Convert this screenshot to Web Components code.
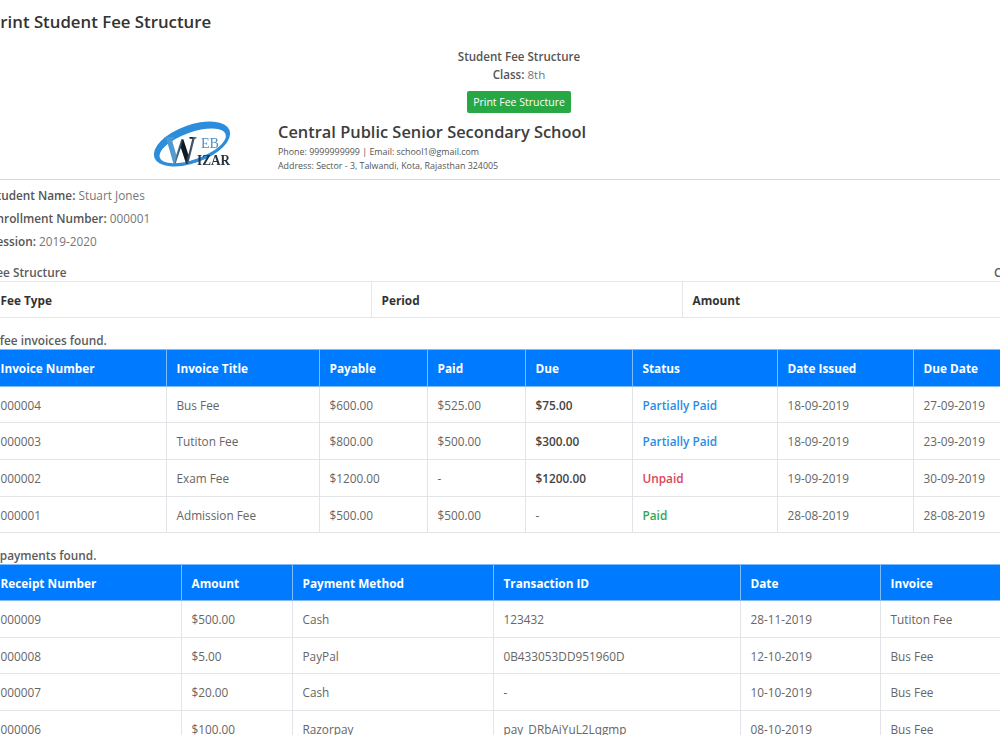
<!DOCTYPE html>
<html lang="en">
<head>
<meta charset="utf-8">
<title>Print Student Fee Structure</title>
<style>
  html, body { margin: 0; background: #fff; overflow: hidden; }
  body { font: 11.8px "Open Sans", "Noto Sans", sans-serif; color: #666; }
</style>
</head>
<body>

<app-page>
  <page-title>Print Student Fee Structure</page-title>
  <print-panel>
    <school-letterhead></school-letterhead>
  </print-panel>
  <student-info></student-info>

  <section-caption right="Class: 8th" style="height:28px">Fee Structure</section-caption>
  <data-table id="fees" plain></data-table>

  <section-caption style="height:31px">4 fee invoices found.</section-caption>
  <data-table id="invoices"></data-table>

  <section-caption style="height:31px">9 payments found.</section-caption>
  <data-table id="payments"></data-table>
</app-page>

<script>
class AppPage extends HTMLElement {
    connectedCallback() {
        this.attachShadow({ mode: 'open' });
        this.shadowRoot.innerHTML = `
            <style>
                :host { display: block; height: 735px; overflow: hidden; }
                .inner { margin-left: -10px; width: 1058px; }
            </style>
            <div class="inner"><slot></slot></div>
        `;
    }
}

class PageTitle extends HTMLElement {
    connectedCallback() {
        this.attachShadow({ mode: 'open' });
        this.shadowRoot.innerHTML = `
            <style>
                :host {
                    display: block;
                    padding: 11px 0 0 0;
                    height: 33px;
                    font-size: 16.8px;
                    font-weight: 600;
                    line-height: 22px;
                    color: #333;
                }
            </style>
            <slot></slot>
        `;
    }
}

class PrintPanel extends HTMLElement {
    connectedCallback() {
        this.attachShadow({ mode: 'open' });
        this.shadowRoot.innerHTML = `
            <style>
                :host { display: block; text-align: center; padding-top: 4px; }
                .head { font-weight: 600; color: #555; line-height: 18px; font-size: 11.6px; }
                .cls { height: 18px; line-height: 18px; color: #555; font-size: 11.6px; font-weight: 600; }
                .cls span { font-weight: 400; color: #777; }
                button {
                    display: block;
                    margin: 7px auto 7px;
                    width: 104px;
                    height: 22px;
                    padding: 0;
                    border: 0;
                    border-radius: 2px;
                    background: #28a745;
                    color: #fff;
                    font: 10.5px "Open Sans", "Noto Sans", sans-serif;
                }
            </style>
            <div class="head">Student Fee Structure</div>
            <div class="cls">Class: <span>8th</span></div>
            <button>Print Fee Structure</button>
            <slot></slot>
        `;
    }
}

class SchoolLetterhead extends HTMLElement {
    connectedCallback() {
        this.attachShadow({ mode: 'open' });
        this.shadowRoot.innerHTML = `
            <style>
                :host {
                    display: block;
                    border-bottom: 1px solid #d8d8d8;
                    text-align: left;
                    height: 59px;
                }
                .row { display: flex; padding-left: 164px; }
                svg { width: 78px; height: 48px; flex: none; overflow: visible; filter: blur(.4px); }
                .txt { margin-left: 46px; }
                h1 { margin: 0 0 1px; font-size: 16.4px; font-weight: 600; line-height: 24px; color: #3d3d3d; }
                p { margin: 0; font-size: 8.9px; line-height: 14px; color: #555; }
            </style>
            <div class="row">
                <svg viewBox="0 0 78 48" aria-label="Web Wizar logo">
                    <defs>
                        <linearGradient id="w" x1="0" y1="0" x2="1" y2=".3">
                            <stop offset="0" stop-color="#3f97d8"/>
                            <stop offset=".5" stop-color="#5a9ccc"/>
                            <stop offset=".62" stop-color="#101820"/>
                            <stop offset=".8" stop-color="#101820"/>
                            <stop offset="1" stop-color="#7aa6c8"/>
                        </linearGradient>
                    </defs>
                    <g transform="rotate(-20 38 24)">
                        <path fill="#2b8ddb" fill-rule="evenodd" d="M-2 24a40 19 0 1 0 80 0a40 19 0 1 0 -80 0z M3 26a35 13.5 0 1 0 70 0a35 13.5 0 1 0 -70 0z"/>
                    </g>
                    <text x="10" y="43" font-family="Liberation Serif" font-weight="700" font-size="40" fill="url(#w)" textLength="33" lengthAdjust="spacingAndGlyphs">W</text>
                    <text x="47" y="28" font-family="Liberation Serif" font-size="15" fill="#4f8fc2" textLength="18" lengthAdjust="spacingAndGlyphs">EB</text>
                    <text x="43" y="45" font-family="Liberation Serif" font-weight="700" font-size="14" fill="#2a3340" textLength="33" lengthAdjust="spacingAndGlyphs">IZAR</text>
                </svg>
                <div class="txt">
                    <h1>Central Public Senior Secondary School</h1>
                    <p>Phone: 9999999999 | Email: school1@gmail.com</p>
                    <p>Address: Sector - 3, Talwandi, Kota, Rajasthan 324005</p>
                </div>
            </div>
        `;
    }
}

class StudentInfo extends HTMLElement {
    connectedCallback() {
        this.attachShadow({ mode: 'open' });
        this.shadowRoot.innerHTML = `
            <style>
                :host { display: block; padding-top: 4px; color: #777; }
                div { height: 23px; line-height: 23px; }
                b { font-weight: 600; color: #555; }
            </style>
            <div><b>Student Name:</b> Stuart Jones</div>
            <div><b>Enrollment Number:</b> 000001</div>
            <div><b>Session:</b> 2019-2020</div>
        `;
    }
}

class SectionCaption extends HTMLElement {
    connectedCallback() {
        this.attachShadow({ mode: 'open' });
        const right = this.getAttribute('right');
        this.shadowRoot.innerHTML = `
            <style>
                :host {
                    display: flex;
                    justify-content: space-between;
                    align-items: flex-end;
                    line-height: 18px;
                    font-weight: 600;
                    color: #5c5c5c;
                }
                .right { width: 54px; white-space: nowrap; }
            </style>
            <div><slot></slot></div>
            ${right ? `<div class="right">${right}</div>` : ''}
        `;
    }
}

class DataTable extends HTMLElement {
    set data(d) {
        this.attachShadow({ mode: 'open' });
        const plain = this.hasAttribute('plain');
        const cols = d.widths.map(w => `<col style="width:${w}px">`).join('');
        const heads = d.heads.map(h => `<th>${h}</th>`).join('');
        // row heights alternate because the source rows are 36.67px tall
        const rows = (d.rows || []).map((r, i) => `<tr style="height:${d.heights[i]}px">${r.map(c => {
            if (c && c.cls) return `<td class="${c.cls}">${c.t}</td>`;
            return `<td>${c}</td>`;
        }).join('')}</tr>`).join('');
        this.shadowRoot.innerHTML = `
            <style>
                :host { display: block; }
                table { border-collapse: collapse; table-layout: fixed; width: ${d.widths.reduce((a, b) => a + b, 0)}px; }
                th, td {
                    padding: 0 10px 0 9.5px;
                    border: 1px solid #e2e4e8;
                    text-align: left;
                    white-space: nowrap;
                    box-sizing: border-box;
                }
                th { font-weight: 700; background: #007bff; color: #fff; border-color: #7fbcfb; }
                td { color: #666; }
                .plain th { background: #fff; color: #333; border-color: #e6e6e6; }
                .due { font-weight: 600; color: #444; }
                .part { font-weight: 600; color: #2b8ce6; }
                .unpaid { font-weight: 600; color: #d9455a; }
                .paid { font-weight: 600; color: #2fa84f; }
            </style>
            <table class="${plain ? 'plain' : ''}">
                <colgroup>${cols}</colgroup>
                <thead><tr style="height:${d.headHeight || 36}px">${heads}</tr></thead>
                <tbody>${rows}</tbody>
            </table>
        `;
    }
}

customElements.define('app-page', AppPage);
customElements.define('page-title', PageTitle);
customElements.define('print-panel', PrintPanel);
customElements.define('school-letterhead', SchoolLetterhead);
customElements.define('student-info', StudentInfo);
customElements.define('section-caption', SectionCaption);
customElements.define('data-table', DataTable);

const due = t => ({ t, cls: 'due' });
const part = { t: 'Partially Paid', cls: 'part' };
const unpaid = { t: 'Unpaid', cls: 'unpaid' };
const paid = { t: 'Paid', cls: 'paid' };

document.getElementById('fees').data = {
    widths: [381, 311, 364],
    heads: ['Fee Type', 'Period', 'Amount']
};

document.getElementById('invoices').data = {
    widths: [176, 153, 108, 98, 107, 145, 136, 133],
    heads: ['Invoice Number', 'Invoice Title', 'Payable', 'Paid', 'Due', 'Status', 'Date Issued', 'Due Date'],
    headHeight: 37,
    heights: [36, 37, 37, 36],
    rows: [
        ['000004', 'Bus Fee', '$600.00', '$525.00', due('$75.00'), part, '18-09-2019', '27-09-2019'],
        ['000003', 'Tutiton Fee', '$800.00', '$500.00', due('$300.00'), part, '18-09-2019', '23-09-2019'],
        ['000002', 'Exam Fee', '$1200.00', '-', due('$1200.00'), unpaid, '19-09-2019', '30-09-2019'],
        ['000001', 'Admission Fee', '$500.00', '$500.00', '-', paid, '28-08-2019', '28-08-2019']
    ]
};

document.getElementById('payments').data = {
    widths: [191, 111, 201, 247, 140, 166],
    heads: ['Receipt Number', 'Amount', 'Payment Method', 'Transaction ID', 'Date', 'Invoice'],
    heights: [37, 36, 37, 37],
    rows: [
        ['000009', '$500.00', 'Cash', '123432', '28-11-2019', 'Tutiton Fee'],
        ['000008', '$5.00', 'PayPal', '0B433053DD951960D', '12-10-2019', 'Bus Fee'],
        ['000007', '$20.00', 'Cash', '-', '10-10-2019', 'Bus Fee'],
        ['000006', '$100.00', 'Razorpay', 'pay_DRbAiYuL2Lqgmp', '08-10-2019', 'Bus Fee']
    ]
};
</script>
</body>
</html>
